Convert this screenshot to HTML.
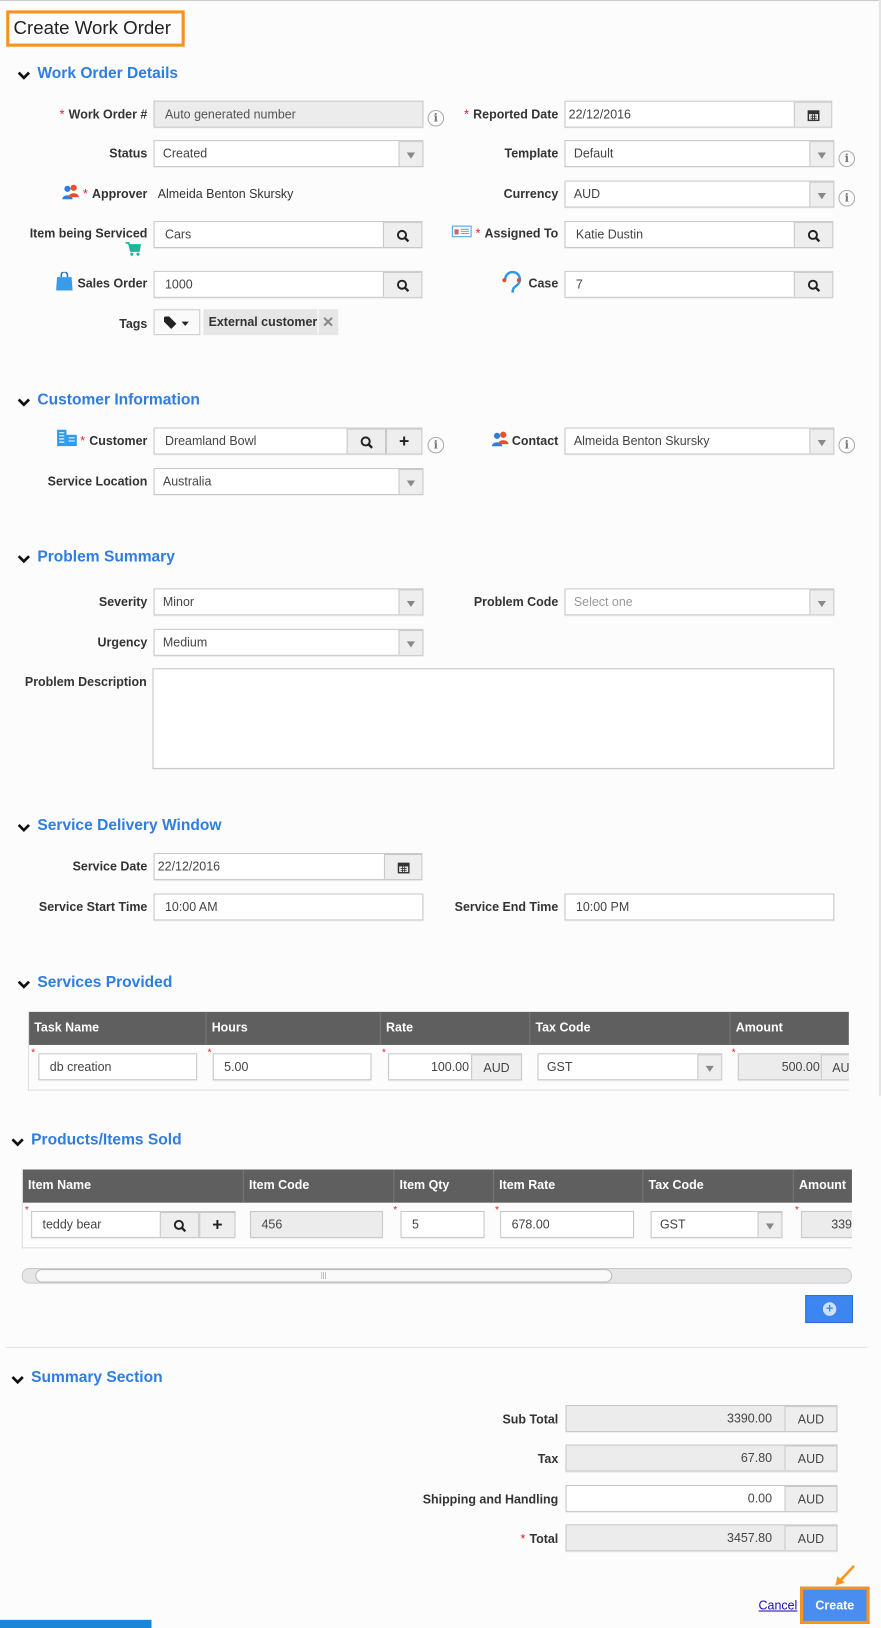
<!DOCTYPE html>
<html><head><meta charset="utf-8"><style>
*{box-sizing:border-box}
body{margin:0;width:881px;height:1628px;background:#fcfcfc;font-family:"Liberation Sans",sans-serif;position:relative;overflow:hidden;color:#333}
div,span{position:absolute}
#w{left:0;top:0;width:849px;height:1569px;transform:scale(1.03769);transform-origin:0 0}
.L{font-size:12px;font-weight:bold;color:#333;text-align:right;white-space:nowrap}
.L .s{position:static;color:#e02020;font-weight:normal;margin-right:4px}
.I{height:26px;border:1px solid #c8c8c8;background:#fff;font-size:12px;line-height:24px;padding-left:10px;color:#444;white-space:nowrap;overflow:hidden;box-shadow:0 1px 1px #e4e4e4}
.g{background:#ececec}
.B{height:26px;border:1px solid #c8c8c8;background:#eee;top:0;text-align:center;line-height:24px;font-size:12px;color:#444}
.H{font-size:15px;font-weight:bold;color:#2f7de1}
.info{width:16px;height:16px;border:1px solid #aaa;border-radius:50%;font-size:11px;font-weight:bold;color:#777;text-align:center;line-height:14px;font-family:"DejaVu Serif",serif}
.th{background:#5f5f5f;color:#fff;font-size:12px;font-weight:bold;height:32px;line-height:30px}
.th span{top:0;padding-left:5px;border-left:1px solid #777;height:32px}
.r{color:#e02020;font-size:10px}
</style></head><body>
<svg width="0" height="0" style="position:absolute"><defs>
<symbol id="sr" viewBox="0 0 14 14"><circle cx="5.8" cy="5.8" r="4.2" fill="none" stroke="#222" stroke-width="2"/><line x1="9" y1="9" x2="12.5" y2="12.5" stroke="#222" stroke-width="2.4"/></symbol>
<symbol id="dd" viewBox="0 0 8 6"><path d="M0 0h8L4 6z" fill="#888"/></symbol>
<symbol id="cv" viewBox="0 0 12 10"><path d="M1 2l5 5 5-5" fill="none" stroke="#111" stroke-width="2.6"/></symbol>
<symbol id="cal" viewBox="0 0 12 12"><rect x="1" y="2" width="10" height="9" fill="none" stroke="#333" stroke-width="1.4"/><rect x="1" y="2" width="10" height="3" fill="#333"/><path d="M3 7h6M3 9h6M5 5v6M7 5v6" stroke="#333" stroke-width=".8"/></symbol>
</defs></svg>
<div id="w">
<div style="left:0;top:0;width:849px;height:1px;background:#ccc"></div>
<div style="left:847px;top:0;width:2px;height:1056px;background:#e4e4e4"></div>
<div style="left:6px;top:10px;width:172px;height:35px;border:3px solid #f7931e;font-size:18px;line-height:28px;padding-left:4px;color:#222">Create Work Order</div>

<svg style="position:absolute;left:17px;top:68px" width="12" height="10"><use href="#cv"/></svg>
<div class="H" style="left:36px;top:62px">Work Order Details</div>

<div class="L" style="right:707px;top:103px"><span class="s">*</span>Work Order #</div>
<div class="I g" style="left:148px;top:97px;width:260px;color:#555">Auto generated number</div>
<div class="info" style="left:412px;top:106px">i</div>
<div class="L" style="right:311px;top:103px"><span class="s">*</span>Reported Date</div>
<div class="I" style="left:544px;top:97px;width:258px;padding-left:3px">22/12/2016<div class="B" style="right:-1px;width:37px"><svg width="12" height="12" style="margin-top:6px"><use href="#cal"/></svg></div></div>

<div class="L" style="right:707px;top:141px">Status</div>
<div class="I" style="left:148px;top:135px;width:260px;padding-left:8px">Created<div class="B" style="right:-1px;width:24px"><svg width="8" height="6"><use href="#dd"/></svg></div></div>
<div class="L" style="right:311px;top:141px">Template</div>
<div class="I" style="left:544px;top:135px;width:260px;padding-left:8px">Default<div class="B" style="right:-1px;width:24px"><svg width="8" height="6"><use href="#dd"/></svg></div></div>
<div class="info" style="left:808px;top:145px">i</div>

<svg style="position:absolute;left:59px;top:177px" width="18" height="16"><circle cx="6" cy="5" r="3" fill="#2f7de1"/><path d="M1 15c0-5 10-5 10 0z" fill="#2f7de1"/><circle cx="12" cy="4" r="3" fill="#e8502a"/><path d="M7 13c0-5 10-5 10 0z" fill="#e8502a"/></svg>
<div class="L" style="right:707px;top:180px"><span class="s">*</span>Approver</div>
<div style="left:152px;top:180px;font-size:12px;color:#333">Almeida Benton Skursky</div>
<div class="L" style="right:311px;top:180px">Currency</div>
<div class="I" style="left:544px;top:174px;width:260px;padding-left:8px">AUD<div class="B" style="right:-1px;width:24px"><svg width="8" height="6"><use href="#dd"/></svg></div></div>
<div class="info" style="left:808px;top:183px">i</div>

<div class="L" style="right:707px;top:218px">Item being Serviced</div>
<svg style="position:absolute;left:120px;top:233px" width="16" height="14"><path d="M1 1h3l2 8h8l1-6H5" fill="#1fb59a" stroke="#1fb59a" stroke-width="1.5"/><circle cx="7" cy="12" r="1.5" fill="#1fb59a"/><circle cx="13" cy="12" r="1.5" fill="#1fb59a"/></svg>
<div class="I" style="left:148px;top:213px;width:259px">Cars<div class="B" style="right:-1px;width:38px"><svg width="13" height="13" style="margin-top:6px"><use href="#sr"/></svg></div></div>
<svg style="position:absolute;left:435px;top:217px" width="20" height="12"><rect width="20" height="12" fill="#cfe6fa"/><rect x="1" y="1" width="18" height="10" fill="#fff" stroke="#5aa9ee"/><rect x="3" y="4" width="4" height="5" fill="#c66"/><path d="M9 4h8M9 6h8M9 8h8" stroke="#5aa9ee"/></svg>
<div class="L" style="right:311px;top:218px"><span class="s">*</span>Assigned To</div>
<div class="I" style="left:544px;top:213px;width:259px">Katie Dustin<div class="B" style="right:-1px;width:38px"><svg width="13" height="13" style="margin-top:6px"><use href="#sr"/></svg></div></div>

<svg style="position:absolute;left:54px;top:262px" width="16" height="18"><path d="M5 5V3a3 3 0 0 1 6 0v2" fill="none" stroke="#1a74c8" stroke-width="1.5"/><path d="M1 5h14l1 13H0z" fill="#3a9be8"/></svg>
<div class="L" style="right:707px;top:266px">Sales Order</div>
<div class="I" style="left:148px;top:261px;width:259px">1000<div class="B" style="right:-1px;width:38px"><svg width="13" height="13" style="margin-top:6px"><use href="#sr"/></svg></div></div>
<svg style="position:absolute;left:482px;top:261px" width="22" height="24"><path d="M5 9a7 7 0 1 1 12 4c-3 3-5 3-5 8" fill="none" stroke="#2f9be8" stroke-width="2.4"/><circle cx="4" cy="9" r="2" fill="#e8502a"/><circle cx="18" cy="9" r="2" fill="#e8502a"/></svg>
<div class="L" style="right:311px;top:266px">Case</div>
<div class="I" style="left:544px;top:261px;width:259px">7<div class="B" style="right:-1px;width:38px"><svg width="13" height="13" style="margin-top:6px"><use href="#sr"/></svg></div></div>

<div class="L" style="right:707px;top:305px">Tags</div>
<div style="left:148px;top:298px;width:45px;height:25px;border:1px solid #ccc;background:#fafafa"><svg style="position:absolute;left:9px;top:6px" width="24" height="12"><path d="M0 1v4l7 7 5-5-7-7H1z" fill="#222"/><path d="M17 5h7l-3.5 4z" fill="#222"/></svg></div>
<div style="left:196px;top:298px;width:130px;height:25px;background:#e6e6e6;font-size:12px;font-weight:bold;line-height:24px;padding-left:5px;color:#333">External customer<span style="right:4px;top:0;color:#888;font-size:14px;border-left:1px solid #fff;padding-left:3px">✕</span></div>

<svg style="position:absolute;left:17px;top:383px" width="12" height="10"><use href="#cv"/></svg>
<div class="H" style="left:36px;top:377px">Customer Information</div>
<svg style="position:absolute;left:55px;top:414px" width="20" height="16"><rect x="0" y="0" width="9" height="16" fill="#2f9be8"/><rect x="9" y="5" width="10" height="11" fill="#2f9be8"/><path d="M2 3h5M2 6h5M2 9h5M2 12h5M11 8h6M11 11h6" stroke="#fff"/></svg>
<div class="L" style="right:707px;top:418px"><span class="s">*</span>Customer</div>
<div class="I" style="left:148px;top:412px;width:259px">Dreamland Bowl<div class="B" style="right:34px;width:38px"><svg width="13" height="13" style="margin-top:6px"><use href="#sr"/></svg></div><div class="B" style="right:-1px;width:35px;font-size:17px;font-weight:bold;color:#222">+</div></div>
<div class="info" style="left:412px;top:421px">i</div>
<svg style="position:absolute;left:473px;top:415px" width="18" height="16"><circle cx="6" cy="5" r="3" fill="#2f7de1"/><path d="M1 15c0-5 10-5 10 0z" fill="#2f7de1"/><circle cx="12" cy="4" r="3" fill="#e8502a"/><path d="M7 13c0-5 10-5 10 0z" fill="#e8502a"/></svg>
<div class="L" style="right:311px;top:418px">Contact</div>
<div class="I" style="left:544px;top:412px;width:260px;padding-left:8px">Almeida Benton Skursky<div class="B" style="right:-1px;width:24px"><svg width="8" height="6"><use href="#dd"/></svg></div></div>
<div class="info" style="left:808px;top:421px">i</div>
<div class="L" style="right:707px;top:457px">Service Location</div>
<div class="I" style="left:148px;top:451px;width:260px;padding-left:8px">Australia<div class="B" style="right:-1px;width:24px"><svg width="8" height="6"><use href="#dd"/></svg></div></div>

<svg style="position:absolute;left:17px;top:534px" width="12" height="10"><use href="#cv"/></svg>
<div class="H" style="left:36px;top:528px">Problem Summary</div>
<div class="L" style="right:707px;top:573px">Severity</div>
<div class="I" style="left:148px;top:567px;width:260px;padding-left:8px">Minor<div class="B" style="right:-1px;width:24px"><svg width="8" height="6"><use href="#dd"/></svg></div></div>
<div class="L" style="right:311px;top:573px">Problem Code</div>
<div class="I" style="left:544px;top:567px;width:260px;padding-left:8px;color:#999">Select one<div class="B" style="right:-1px;width:24px"><svg width="8" height="6"><use href="#dd"/></svg></div></div>
<div class="L" style="right:707px;top:612px">Urgency</div>
<div class="I" style="left:148px;top:606px;width:260px;padding-left:8px">Medium<div class="B" style="right:-1px;width:24px"><svg width="8" height="6"><use href="#dd"/></svg></div></div>
<div class="L" style="left:24px;top:650px">Problem Description</div>
<div class="I" style="left:147px;top:644px;width:657px;height:97px"></div>

<svg style="position:absolute;left:17px;top:793px" width="12" height="10"><use href="#cv"/></svg>
<div class="H" style="left:36px;top:787px">Service Delivery Window</div>
<div class="L" style="right:707px;top:828px">Service Date</div>
<div class="I" style="left:148px;top:822px;width:259px;padding-left:3px">22/12/2016<div class="B" style="right:-1px;width:37px"><svg width="12" height="12" style="margin-top:6px"><use href="#cal"/></svg></div></div>
<div class="L" style="right:707px;top:867px">Service Start Time</div>
<div class="I" style="left:148px;top:861px;width:260px">10:00 AM</div>
<div class="L" style="right:311px;top:867px">Service End Time</div>
<div class="I" style="left:544px;top:861px;width:260px">10:00 PM</div>

<svg style="position:absolute;left:17px;top:944px" width="12" height="10"><use href="#cv"/></svg>
<div class="H" style="left:36px;top:938px">Services Provided</div>
<div style="left:27px;top:975px;width:791px;height:76px;border:1px solid #ddd;border-top:0;border-right:0;background:#fcfcfc;overflow:hidden">
<div class="th" style="left:0;top:0;width:791px"><span style="left:0;border:0">Task Name</span><span style="left:170px">Hours</span><span style="left:338px">Rate</span><span style="left:482px">Tax Code</span><span style="left:675px">Amount</span></div>
<span class="r" style="left:2px;top:34px">*</span><div class="I" style="left:9px;top:40px;width:153px">db creation</div>
<span class="r" style="left:172px;top:34px">*</span><div class="I" style="left:177px;top:40px;width:153px">5.00</div>
<span class="r" style="left:340px;top:34px">*</span><div class="I" style="left:346px;top:40px;width:129px;padding:0 50px 0 0;text-align:right">100.00<div class="B" style="right:-1px;width:49px">AUD</div></div>
<div class="I" style="left:490px;top:40px;width:178px;padding-left:8px">GST<div class="B" style="right:-1px;width:24px"><svg width="8" height="6"><use href="#dd"/></svg></div></div>
<span class="r" style="left:677px;top:34px">*</span><div class="I g" style="left:683px;top:40px;width:110px;padding:0 30px 0 0;text-align:right">500.00<div class="B" style="left:79px;width:40px;text-align:left;padding-left:10px">AUD</div></div>
</div>

<svg style="position:absolute;left:11px;top:1096px" width="12" height="10"><use href="#cv"/></svg>
<div class="H" style="left:30px;top:1090px">Products/Items Sold</div>
<div style="left:21px;top:1127px;width:800px;height:76px;border:1px solid #ddd;border-top:0;border-right:0;overflow:hidden">
<div class="th" style="left:0;top:0;width:800px"><span style="left:0;border:0">Item Name</span><span style="left:212px">Item Code</span><span style="left:357px">Item Qty</span><span style="left:453px">Item Rate</span><span style="left:597px">Tax Code</span><span style="left:742px">Amount</span></div>
<span class="r" style="left:2px;top:34px">*</span><div class="I" style="left:8px;top:40px;width:197px">teddy bear<div class="B" style="right:34px;width:38px"><svg width="13" height="13" style="margin-top:6px"><use href="#sr"/></svg></div><div class="B" style="right:-1px;width:35px;font-size:17px;font-weight:bold;color:#222">+</div></div>
<div class="I g" style="left:219px;top:40px;width:128px">456</div>
<span class="r" style="left:357px;top:34px">*</span><div class="I" style="left:364px;top:40px;width:81px">5</div>
<span class="r" style="left:455px;top:34px">*</span><div class="I" style="left:460px;top:40px;width:129px">678.00</div>
<div class="I" style="left:605px;top:40px;width:127px;padding-left:8px">GST<div class="B" style="right:-1px;width:24px"><svg width="8" height="6"><use href="#dd"/></svg></div></div>
<span class="r" style="left:744px;top:34px">*</span><div class="I g" style="left:750px;top:40px;width:80px;padding-left:28px">3390.00</div>
</div>
<div style="left:21px;top:1222px;width:800px;height:15px;border:1px solid #ccc;border-radius:7px;background:#e6e6e6"><div style="left:12px;top:0;width:556px;height:13px;border:1px solid #bbb;border-radius:7px;background:#fafafa;text-align:center;font-size:7px;color:#999;line-height:12px">|||</div></div>
<div style="left:776px;top:1248px;width:46px;height:27px;background:#3d85f0;border:1px solid #2f6fd0"><div style="left:16px;top:6px;width:13px;height:13px;border-radius:50%;background:#cfe0fb;color:#3d85f0;font-size:12px;font-weight:bold;line-height:13px;text-align:center">+</div></div>
<div style="left:6px;top:1298px;width:830px;height:1px;background:#e2e2e2"></div>

<svg style="position:absolute;left:11px;top:1325px" width="12" height="10"><use href="#cv"/></svg>
<div class="H" style="left:30px;top:1319px">Summary Section</div>
<div class="L" style="right:311px;top:1361px">Sub Total</div>
<div class="I g" style="left:545px;top:1354px;width:262px;padding:0 62px 0 0;text-align:right">3390.00<div class="B" style="right:-1px;width:51px">AUD</div></div>
<div class="L" style="right:311px;top:1399px">Tax</div>
<div class="I g" style="left:545px;top:1392px;width:262px;padding:0 62px 0 0;text-align:right">67.80<div class="B" style="right:-1px;width:51px">AUD</div></div>
<div class="L" style="right:311px;top:1438px">Shipping and Handling</div>
<div class="I" style="left:545px;top:1431px;width:262px;padding:0 62px 0 0;text-align:right">0.00<div class="B" style="right:-1px;width:51px">AUD</div></div>
<div class="L" style="right:311px;top:1476px"><span class="s">*</span>Total</div>
<div class="I g" style="left:545px;top:1469px;width:262px;padding:0 62px 0 0;text-align:right">3457.80<div class="B" style="right:-1px;width:51px">AUD</div></div>

<div style="left:731px;top:1540px;font-size:12px;color:#1a0dab;text-decoration:underline">Cancel</div>
<div style="left:771px;top:1529px;width:67px;height:36px;border:3px solid #f7931e;background:#4a8df0;color:#fff;font-size:12px;font-weight:bold;text-align:center;line-height:30px">Create</div>
<svg style="position:absolute;left:803px;top:1507px" width="24" height="24"><path d="M20 2L5 18" stroke="#f7931e" stroke-width="2.5"/><path d="M2 21l2-9 7 6z" fill="#f7931e"/></svg>
<div style="left:0;top:1561px;width:146px;height:8px;background:#1a86d9"></div>
</div>
</body></html>
